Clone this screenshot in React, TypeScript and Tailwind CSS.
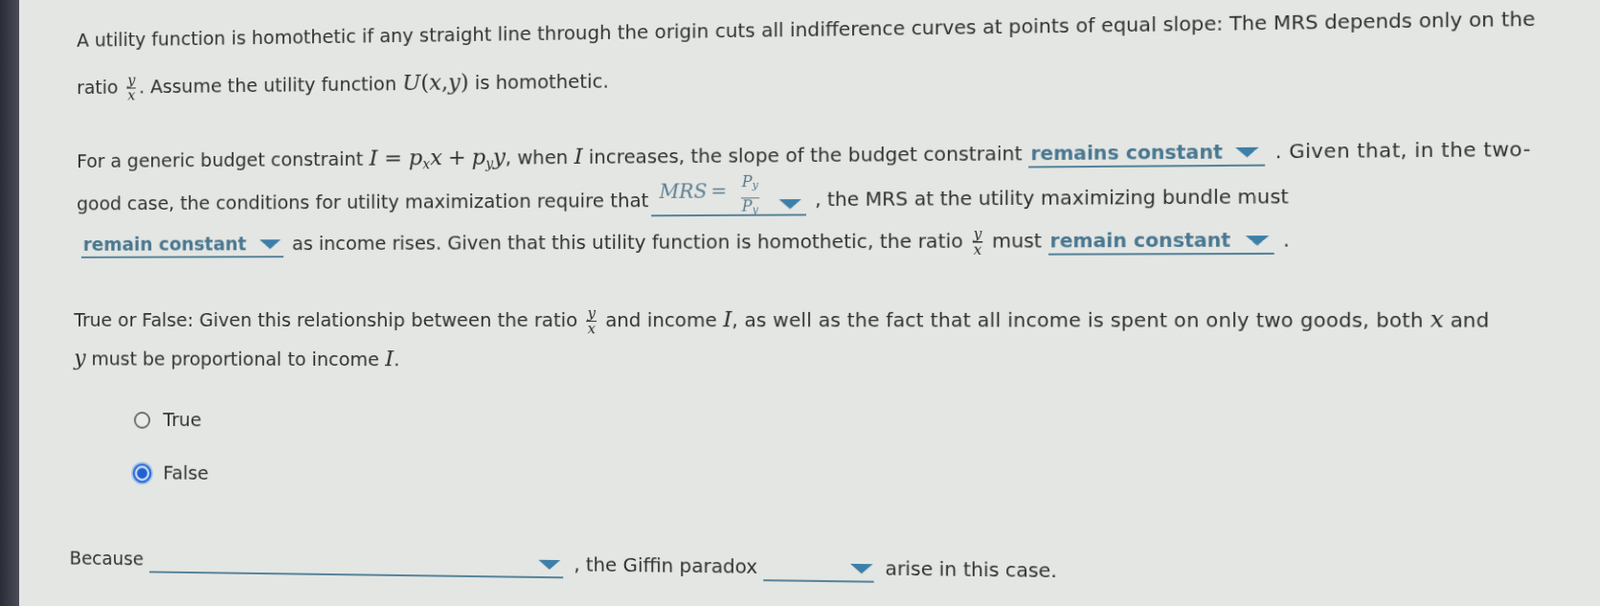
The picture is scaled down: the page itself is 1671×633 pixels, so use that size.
import React from "react";

const SERIF = "font-['DejaVu_Serif',serif]";

function Frac({ num, den }: { num: React.ReactNode; den: React.ReactNode }) {
  return (
    <span className={"inline-flex flex-col items-center align-middle mx-[3px] italic text-[15px] leading-[13px] " + SERIF}>
      <span className="px-[1px]">{num}</span>
      <span className="h-[1px] w-full bg-current my-[1px]" />
      <span className="px-[1px]">{den}</span>
    </span>
  );
}

function Tri({ cls = "" }: { cls?: string }) {
  return (
    <svg className={"shrink-0 " + cls} width="23" height="10" viewBox="0 0 23 10">
      <path d="M0 0H23L11.5 10Z" fill="#3d7fa8" />
    </svg>
  );
}

function Dd({ text, cls, triCls }: { text: string; cls: string; triCls: string }) {
  return (
    <span
      className={
        "inline-flex items-center border-b-2 border-[#57849b] leading-[24px] font-bold text-[19.4px] text-[#4a7890] align-baseline " +
        cls
      }
    >
      <span className="pl-[2px]">{text}</span>
      <Tri cls={"ml-auto " + triCls} />
    </span>
  );
}

function M({ children }: { children: React.ReactNode }) {
  return <span className={"italic text-[23px] " + SERIF}>{children}</span>;
}

function Op({ children, cls = "" }: { children: React.ReactNode; cls?: string }) {
  return <span className={"text-[23px] " + SERIF + " " + cls}>{children}</span>;
}

function Sub({ children }: { children: React.ReactNode }) {
  return <span className={"italic text-[14px] align-[-4px] " + SERIF}>{children}</span>;
}

export default function App() {
  return (
    <div className="flex w-[1671px] h-[633px] overflow-hidden bg-[#e4e6e3] font-['DejaVu_Sans',Verdana,sans-serif] text-[19.8px]">
      <div className="w-[20px] shrink-0 bg-linear-to-r from-[#2a2c37] to-[#4a4c59]" />
      <div className="flex-1 pl-[46px] pt-[19px] text-[#2f3131] origin-[822px_330px] [transform:scale(1.025)_perspective(2000px)_rotateY(-5.74deg)]">
        {/* Paragraph 1 */}
        <div className="h-[40px] leading-[40px] whitespace-nowrap">
          A utility function is homothetic if any straight line through the origin cuts all indifference curves at points of equal slope: The MRS depends only on the
        </div>
        <div className="h-[40px] leading-[40px] whitespace-nowrap mt-[7.6px]">
          ratio <Frac num="y" den="x" />. Assume the utility function <M>U</M>
          <Op>(</Op>
          <M>x</M>
          <Op>,</Op>
          <M>y</M>
          <Op>)</Op> is homothetic.
        </div>

        {/* Paragraph 2 */}
        <div className="h-[40px] leading-[40px] whitespace-nowrap mt-[38.5px]">
          For a generic budget constraint <M>I</M>
          <Op cls="mx-[7px]">=</Op>
          <M>p</M>
          <Sub>x</Sub>
          <M>x</M>
          <Op cls="mx-[6px]">+</Op>
          <M>p</M>
          <Sub>y</Sub>
          <M>y</M>, when <M>I</M> increases, the slope of the budget constraint{" "}
          <Dd text="remains constant" cls="w-[234px]" triCls="mr-[6px]" />
          <span className="ml-[3px] tracking-[0.45px]"> . Given that, in the two-</span>
        </div>
        <div className="h-[40px] leading-[40px] whitespace-nowrap mt-[6.6px]">
          good case, the conditions for utility maximization require that{" "}
          <span className="inline-flex items-start h-[43px] w-[160px] -mt-[12px] -ml-[4px] border-b-2 border-[#57849b] align-[9px] text-[#5b7c8e] leading-none">
            <span className={"italic text-[20px] leading-[21px] mt-[7px] ml-[9px] " + SERIF}>MRS</span>
            <span className={"text-[20px] leading-[21px] mt-[7px] ml-[4px] " + SERIF}>=</span>
            <span className={"inline-flex flex-col items-center ml-[14px] italic text-[16px] leading-[16px] " + SERIF}>
              <span className="px-[1px]">
                P<span className="text-[11px] align-[-2px]">y</span>
              </span>
              <span className="h-[1px] w-full bg-current mt-[4px]" />
              <span className="px-[1px]">
                P<span className="text-[11px] align-[-2px]">y</span>
              </span>
            </span>
            <Tri cls="ml-auto mr-[5px] mt-[26px]" />
          </span>
          <span className="ml-[3px]"> , the MRS at the utility maximizing bundle must</span>
        </div>
        <div className="h-[40px] leading-[40px] whitespace-nowrap mt-[3.6px] ml-[5px]">
          <Dd text="remain constant" cls="w-[221px]" triCls="mr-[3px]" />
          <span className="ml-[3px]"> as income rises. Given that this utility function is homothetic, the ratio </span>
          <Frac num="y" den="x" /> must <Dd text="remain constant" cls="w-[223px]" triCls="mr-[5px]" />
          <span className="ml-[3px]"> .</span>
        </div>

        {/* Paragraph 3 */}
        <div className="h-[40px] leading-[40px] whitespace-nowrap mt-[37.5px] -ml-[3px]">
          True or False: Given this relationship between the ratio <Frac num="y" den="x" /> and income <M>I</M>
          <span className="tracking-[0.2px]">, as well as the fact that all income is spent on only two goods, both </span>
          <M>x</M> and
        </div>
        <div className="h-[40px] leading-[40px] whitespace-nowrap mt-[1.1px] -ml-[3px]">
          <M>y</M> must be proportional to income <M>I</M>.
        </div>

        {/* Radios */}
        <div className="flex flex-col ml-[63px] mt-[26px]">
          <label className="flex items-center h-[40px] gap-[14px]">
            <span className="w-[18px] h-[18px] rounded-full border-2 border-[#6a6c6b] bg-[#e9ebe8]" />
            <span>True</span>
          </label>
          <label className="flex items-center h-[40px] gap-[11px] mt-[15.7px] -ml-[3px]">
            <svg width="24" height="24" viewBox="0 0 20 20">
              <circle cx="10" cy="10" r="10" fill="#a9c7ee" />
              <circle cx="10" cy="10" r="7.6" fill="#d6e4f6" stroke="#2f6fd5" strokeWidth="2" />
              <circle cx="10" cy="10" r="4.8" fill="#2361cf" />
            </svg>
            <span>False</span>
          </label>
        </div>

        {/* Because line */}
        <div className="h-[40px] leading-[40px] whitespace-nowrap mt-[51px] -ml-[8px]">
          <span className="text-[19.3px]">Because</span> <Dd text={"\u00a0"} cls="w-[444px]" triCls="mr-[3px]" />
          <span className="ml-[5px]"> , the Giffin paradox </span>
          <Dd text={"\u00a0"} cls="w-[113px]" triCls="mr-[1px]" />
          <span className="ml-[5px]"> arise in this case.</span>
        </div>
      </div>
    </div>
  );
}
